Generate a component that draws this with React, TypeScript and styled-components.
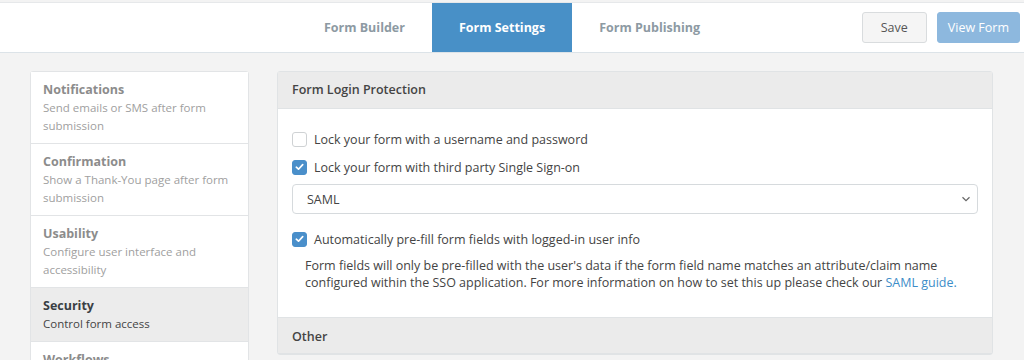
import React, { useState } from "react"
import styled, { createGlobalStyle } from "styled-components"

const GlobalStyle = createGlobalStyle`
  html, body {
    margin: 0;
    padding: 0;
    background: #f3f3f3;
    font-family: "Open Sans", "Liberation Sans", sans-serif;
    color: #444;
    height: 360px;
    overflow: hidden;
  }
  * { box-sizing: border-box; }
`

const Page = styled.div`
  padding-top: 2px;
`

const TopBar = styled.div`
  display: grid;
  grid-template-columns: 1fr auto 1fr;
  align-items: stretch;
  height: 51px;
  background: #fff;
  border-top: 1px solid #e6e8ea;
  border-bottom: 1px solid #dce3e8;
`

const Tabs = styled.nav`
  grid-column: 2;
  display: flex;
  align-items: stretch;
`

const Tab = styled.a<{ $active?: boolean }>`
  display: flex;
  align-items: center;
  padding: 0 27px 1px;
  font-size: 12.5px;
  font-weight: 700;
  text-decoration: none;
  cursor: pointer;
  color: ${(p) => (p.$active ? "#fff" : "#8d9aa3")};
  background: ${(p) => (p.$active ? "#4890c7" : "transparent")};
`

const Actions = styled.div`
  grid-column: 3;
  display: flex;
  align-items: center;
  justify-content: flex-end;
  gap: 10px;
  padding-right: 4px;
`

const Button = styled.button<{ $primary?: boolean }>`
  height: 31px;
  padding: 0 ${(p) => (p.$primary ? "10px" : "18px")};
  font-family: inherit;
  font-size: 12.5px;
  border-radius: 3px;
  cursor: pointer;
  color: ${(p) => (p.$primary ? "#fff" : "#555")};
  background: ${(p) => (p.$primary ? "#8db8de" : "#f5f5f5")};
  border: 1px solid ${(p) => (p.$primary ? "#8db8de" : "#d9dcde")};
`

const Content = styled.div`
  display: flex;
  align-items: flex-start;
  gap: 28px;
  padding: 18px 31px 0 30px;
`

const Sidebar = styled.ul`
  list-style: none;
  margin: 0;
  padding: 0;
  width: 219px;
  flex-shrink: 0;
  background: #fff;
  border: 1px solid #e2e4e6;
  border-radius: 3px;
`

const SideItem = styled.li<{ $active?: boolean }>`
  padding: 9px 12px 8px;
  border-top: 1px solid #e2e4e6;
  background: ${(p) => (p.$active ? "#ececec" : "#fff")};
  cursor: pointer;

  &:first-child {
    border-top: none;
  }
`

const SideTitle = styled.div<{ $active?: boolean }>`
  font-size: 12.5px;
  font-weight: 700;
  line-height: 18px;
  color: ${(p) => (p.$active ? "#3a3f44" : "#8c8c8c")};
`

const SideDesc = styled.div<{ $active?: boolean }>`
  font-size: 11.5px;
  line-height: 18px;
  color: ${(p) => (p.$active ? "#444" : "#a0a0a0")};
`

const Panel = styled.section`
  flex: 1;
  background: #fff;
  border: 1px solid #e0e3e5;
  border-radius: 3px;
`

const PanelHeader = styled.h3<{ $bordered?: boolean }>`
  margin: 0;
  height: 37px;
  display: flex;
  align-items: center;
  padding: 0 14px 1px;
  background: #ebebeb;
  font-size: 12.5px;
  font-weight: 600;
  color: #444;
  border-bottom: 1px solid #e0e3e5;
  ${(p) => p.$bordered && "border-top: 1px solid #e0e3e5; padding-top: 2px;"}
`

const PanelBody = styled.div`
  padding: 20px 14px 26px;
  display: flex;
  flex-direction: column;
`

const CheckRow = styled.label<{ $gap?: number }>`
  display: flex;
  align-items: center;
  gap: 7px;
  height: 20px;
  margin-top: ${(p) => p.$gap ?? 0}px;
  font-size: 12.5px;
  color: #444;
  cursor: pointer;
`

const Box = styled.span<{ $checked?: boolean }>`
  width: 15px;
  height: 15px;
  flex-shrink: 0;
  border-radius: 3px;
  display: flex;
  align-items: center;
  justify-content: center;
  background: ${(p) => (p.$checked ? "#4a8fca" : "#fff")};
  border: 1px solid ${(p) => (p.$checked ? "#4a8fca" : "#cfd2d4")};
`

const SelectBox = styled.div`
  margin-top: 7px;
  height: 30px;
  display: flex;
  align-items: center;
  justify-content: space-between;
  padding: 0 6px 0 14px;
  border: 1px solid #d6dadd;
  border-radius: 4px;
  font-size: 12.5px;
  color: #444;
`

const Note = styled.p`
  margin: 8px 0 0 13px;
  font-size: 12.5px;
  line-height: 17px;
  color: #444;

  a {
    color: #3d8dc8;
    text-decoration: none;
  }
`

const sections = [
  { title: "Notifications", desc: "Send emails or SMS after form submission" },
  { title: "Confirmation", desc: "Show a Thank-You page after form submission" },
  { title: "Usability", desc: "Configure user interface and accessibility" },
  { title: "Security", desc: "Control form access" },
  { title: "Workflows", desc: "Configure approval steps" },
]

function Checkbox({ checked, label, gap, onToggle }: { checked: boolean; label: string; gap?: number; onToggle: () => void }) {
  return (
    <CheckRow $gap={gap} onClick={onToggle}>
      <Box $checked={checked}>
        {checked && (
          <svg width="9" height="8" viewBox="0 0 9 8">
            <path d="M1.3 4.2 L3.5 6.2 L7.7 1.6" fill="none" stroke="#fff" strokeWidth="1.7" strokeLinecap="round" strokeLinejoin="round" />
          </svg>
        )}
      </Box>
      {label}
    </CheckRow>
  )
}

export default function App() {
  const [checks, setChecks] = useState([false, true, true])
  const toggle = (i: number) => setChecks((c) => c.map((v, j) => (j === i ? !v : v)))

  return (
    <Page>
      <GlobalStyle />
      <TopBar>
        <Tabs>
          <Tab>Form Builder</Tab>
          <Tab $active>Form Settings</Tab>
          <Tab>Form Publishing</Tab>
        </Tabs>
        <Actions>
          <Button>Save</Button>
          <Button $primary>View Form</Button>
        </Actions>
      </TopBar>

      <Content>
        <Sidebar>
          {sections.map((s) => {
            const active = s.title === "Security"
            return (
              <SideItem key={s.title} $active={active}>
                <SideTitle $active={active}>{s.title}</SideTitle>
                <SideDesc $active={active}>{s.desc}</SideDesc>
              </SideItem>
            )
          })}
        </Sidebar>

        <Panel>
          <PanelHeader>Form Login Protection</PanelHeader>
          <PanelBody>
            <Checkbox checked={checks[0]} label="Lock your form with a username and password" onToggle={() => toggle(0)} />
            <Checkbox checked={checks[1]} gap={8} label="Lock your form with third party Single Sign-on" onToggle={() => toggle(1)} />
            <SelectBox>
              SAML
              <svg width="10" height="6" viewBox="0 0 10 6">
                <path d="M1.5 1.2 L5 4.6 L8.5 1.2" fill="none" stroke="#666" strokeWidth="1.2" />
              </svg>
            </SelectBox>
            <Checkbox checked={checks[2]} gap={15} label="Automatically pre-fill form fields with logged-in user info" onToggle={() => toggle(2)} />
            <Note>
              Form fields will only be pre-filled with the user's data if the form field name matches an attribute/claim name
              configured within the SSO application. For more information on how to set this up please check our{" "}
              <a href="#">SAML guide.</a>
            </Note>
          </PanelBody>
          <PanelHeader $bordered>Other</PanelHeader>
        </Panel>
      </Content>
    </Page>
  )
}
